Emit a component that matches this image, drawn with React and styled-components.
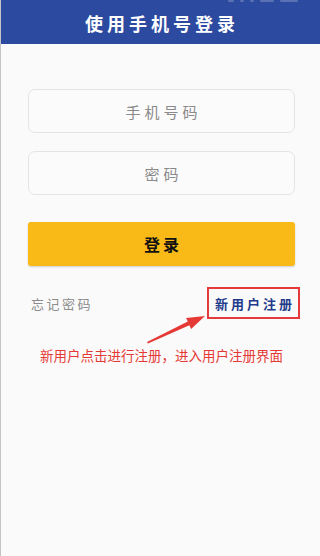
import React from "react";
import styled, { createGlobalStyle } from "styled-components";

const Global = createGlobalStyle`
  html, body { margin: 0; padding: 0; background: #fafafa; }
  body { font-family: "Noto Sans CJK SC", "Noto Sans", sans-serif; }
`;

const Page = styled.div`
  width: 320px;
  height: 556px;
  position: relative;
  background: #fafafa;
  border-left: 1px solid #c4c4c4;
  box-sizing: border-box;
  overflow: hidden;
`;

const Header = styled.header`
  height: 44px;
  margin-left: -1px;
  background: #2c4a9f;
  display: flex;
  align-items: center;
  justify-content: center;
  position: relative;
`;

const Title = styled.h1`
  margin: 2px 0 0 0;
  color: #ffffff;
  font-size: 18px;
  font-weight: 700;
  letter-spacing: 4px;
  text-indent: 4px;
`;

const StatusHint = styled.div`
  position: absolute;
  top: 0;
  right: 22px;
  display: flex;
  gap: 6px;
  align-items: flex-start;
`;

const StatusMark = styled.span`
  display: block;
  width: ${p => p.w}px;
  height: 2px;
  background: rgba(255,255,255,0.22);
  border-radius: 1px;
`;

const Form = styled.main`
  padding: 45px 25px 0 27px;
  display: flex;
  flex-direction: column;
`;

const Field = styled.div`
  height: 44px;
  border: 1px solid #e4e4e4;
  border-radius: 7px;
  background: #fbfbfb;
  box-sizing: border-box;
  display: flex;
  align-items: center;
  justify-content: center;
  color: #8a8a8a;
  font-size: 15px;
  letter-spacing: 4px;
  text-indent: 4px;
  margin-bottom: ${p => p.mb}px;
`;

const Button = styled.div`
  height: 44px;
  background: #f9b917;
  border-radius: 3px;
  box-shadow: 0 1px 2px rgba(0,0,0,0.18);
  display: flex;
  align-items: center;
  justify-content: center;
  color: #111;
  font-size: 16px;
  font-weight: 700;
  letter-spacing: 3px;
  text-indent: 3px;
`;

const LinksRow = styled.div`
  margin-top: 21px;
  margin-right: -5px;
  padding-left: 3px;
  display: flex;
  justify-content: space-between;
  align-items: center;
  height: 32px;
`;

const Forgot = styled.span`
  color: #8c8c8c;
  font-size: 13px;
  letter-spacing: 2.5px;
`;

const RegisterBox = styled.div`
  width: 93px;
  height: 32px;
  box-sizing: border-box;
  border: 2px solid #e53a3a;
  display: flex;
  align-items: center;
  justify-content: center;
  color: #1f3b8c;
  font-size: 13px;
  font-weight: 700;
  letter-spacing: 3px;
  text-indent: 3px;
`;

const Annotation = styled.div`
  position: relative;
  margin-top: 27px;
  margin-left: 12px;
  color: #e53935;
  font-size: 13.5px;
  line-height: 18px;
`;

const Arrow = styled.svg`
  position: absolute;
  left: 106px;
  top: -33px;
`;

export default function App() {
  return (
    <>
      <Global />
      <Page>
        <Header>
          <StatusHint>
            <StatusMark w={6} />
            <StatusMark w={4} />
            <StatusMark w={4} />
            <StatusMark w={14} />
            <StatusMark w={18} />
          </StatusHint>
          <Title>使用手机号登录</Title>
        </Header>
        <Form>
          <Field mb={18}>手机号码</Field>
          <Field mb={27}>密码</Field>
          <Button>登录</Button>
          <LinksRow>
            <Forgot>忘记密码</Forgot>
            <RegisterBox>新用户注册</RegisterBox>
          </LinksRow>
          <Annotation>
            <Arrow width="62" height="32" viewBox="0 0 62 32">
              <path d="M1 29 L41.8 8.6 L40.1 4.9 L59 3 L45.1 15.9 L43.4 12.2 L2 30.5 Z" fill="#e53935" />
            </Arrow>
            新用户点击进行注册，进入用户注册界面
          </Annotation>
        </Form>
      </Page>
    </>
  );
}
